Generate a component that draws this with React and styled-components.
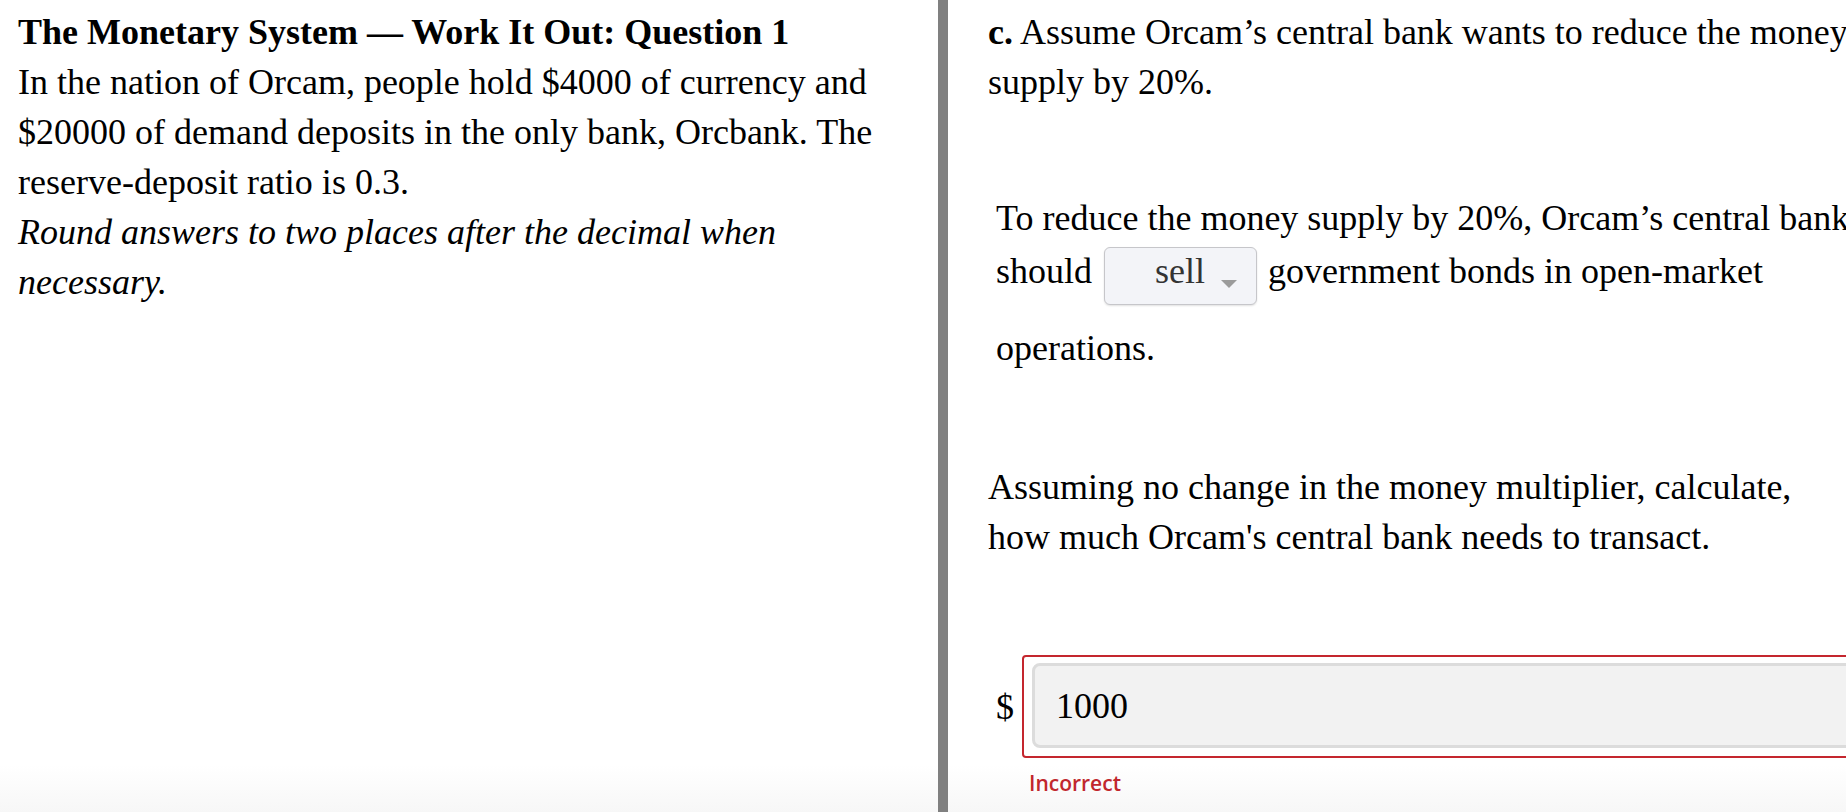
import React from "react";
import styled, { createGlobalStyle } from "styled-components";

const GlobalStyle = createGlobalStyle`
  html, body {
    margin: 0;
    padding: 0;
    overflow: hidden;
  }
  body {
    font-family: "Liberation Serif", "Times New Roman", serif;
    color: #000;
  }
`;

const Page = styled.div`
  display: flex;
  width: 1846px;
  height: 812px;
  overflow: hidden;
  background: linear-gradient(to bottom, #fff 0, #fff 765px, #f7f7f7 812px);
  font-size: 36px;
  line-height: 50px;
`;

const LeftPane = styled.section`
  flex: 0 0 938px;
  box-sizing: border-box;
  padding: 7px 0 0 18px;
`;

const Prompt = styled.div`
  width: 890px;
`;

const Title = styled.div`
  font-weight: bold;
  white-space: nowrap;
`;

const Note = styled.div`
  font-style: italic;
`;

const RightPane = styled.section`
  flex: 1;
  min-width: 0;
  border-left: 10px solid #808080;
  box-sizing: border-box;
  padding: 7px 0 0 40px;
  overflow: hidden;
`;

const Para = styled.p`
  margin: ${(p) => p.$top || 0}px 0 0 ${(p) => p.$indent || 0}px;
  width: ${(p) => p.$width}px;
`;

const Select = styled.span`
  display: inline-block;
  box-sizing: border-box;
  width: 153px;
  height: 58px;
  margin: 4px 11px 18px 12px;
  padding: 0 0 10px 50px;
  border: 1px solid #c6c6ca;
  border-radius: 6px;
  background: #f3f4f8;
  box-shadow: 0 1px 2px rgba(0, 0, 0, 0.12);
  color: #333;
  line-height: 46px;
  white-space: nowrap;
`;

const Caret = styled.span`
  display: inline-block;
  width: 0;
  height: 0;
  margin-left: 16px;
  border-left: 8px solid transparent;
  border-right: 8px solid transparent;
  border-top: 8px solid #9b9b9b;
  vertical-align: -5px;
`;

const AnswerRow = styled.div`
  display: flex;
  align-items: center;
  margin: 93px 0 0 8px;
  width: 900px;
`;

const Unit = styled.span`
  flex: 0 0 auto;
  margin-right: 8px;
`;

const AnswerBox = styled.div`
  flex: 1;
  border: 2px solid #c4262e;
  border-radius: 4px;
  padding: 6px 8px 8px 8px;
`;

const AnswerInput = styled.input`
  display: block;
  box-sizing: border-box;
  width: 100%;
  height: 85px;
  margin: 0;
  padding: 0 0 0 21px;
  border: 3px solid #dcdcdc;
  border-radius: 8px;
  background: #f2f2f2;
  font-family: "Liberation Serif", "Times New Roman", serif;
  font-size: 36px;
  color: #000;
  outline: none;
`;

const Feedback = styled.div`
  margin: 10px 0 0 41px;
  font-family: "Open Sans", "Liberation Sans", sans-serif;
  font-weight: 600;
  font-size: 21px;
  line-height: 30px;
  color: #c1272d;
`;

export default function App() {
  return (
    <>
      <GlobalStyle />
      <Page>
        <LeftPane>
          <Prompt>
            <Title>The Monetary System — Work It Out: Question 1</Title>
            <div>
              In the nation of Orcam, people hold $4000 of currency and $20000
              of demand deposits in the only bank, Orcbank. The reserve-deposit
              ratio is 0.3.
            </div>
            <Note>
              Round answers to two places after the decimal when necessary.
            </Note>
          </Prompt>
        </LeftPane>
        <RightPane>
          <Para $width={880}>
            <b>c.</b> Assume Orcam’s central bank wants to reduce the money
            supply by 20%.
          </Para>
          <Para $top={86} $indent={8} $width={870}>
            To reduce the money supply by 20%, Orcam’s central bank should
            <Select>
              sell
              <Caret />
            </Select>
            government bonds in open-market operations.
          </Para>
          <Para $top={89} $width={850}>
            Assuming no change in the money multiplier, calculate, how much
            Orcam's central bank needs to transact.
          </Para>
          <AnswerRow>
            <Unit>$</Unit>
            <AnswerBox>
              <AnswerInput defaultValue="1000" readOnly />
            </AnswerBox>
          </AnswerRow>
          <Feedback>Incorrect</Feedback>
        </RightPane>
      </Page>
    </>
  );
}
